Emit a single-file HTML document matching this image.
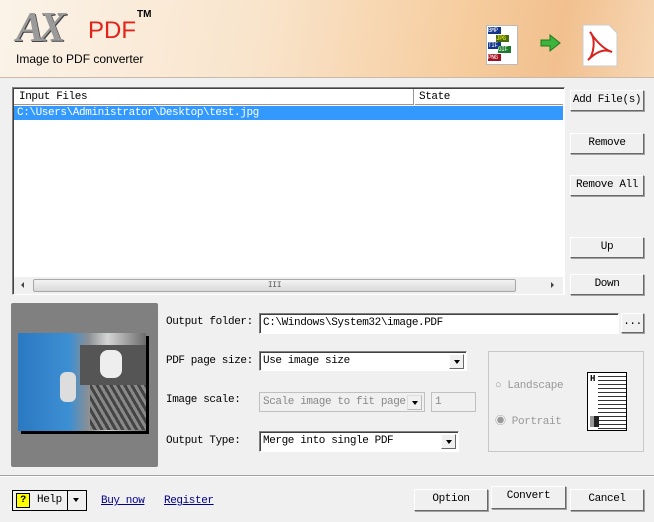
<!DOCTYPE html>
<html><head><style>
*{box-sizing:border-box;margin:0;padding:0}
body{width:654px;height:522px;background:#f0f0f0;position:relative;overflow:hidden;font-family:"Liberation Mono","Noto Sans CJK SC",monospace;font-size:11px;letter-spacing:-0.4px;color:#000}
.a{position:absolute}
.btn{position:absolute;background:#f0f0f0;border:1px solid;border-color:#fff #696969 #696969 #fff;box-shadow:1px 1px 0 #a0a0a0;text-align:center;line-height:19px}
.sunk{position:absolute;background:#fff;border:1px solid;border-color:#808080 #fff #fff #808080;box-shadow:inset 1px 1px 0 #404040;line-height:19px;padding-left:3px}
.dd{position:absolute;right:2px;top:2px;width:15px;height:15px;background:#f0f0f0;border:1px solid;border-color:#fff #696969 #696969 #fff}
.dd:after{content:"";position:absolute;left:4px;top:5px;border:3px solid transparent;border-top:4px solid #000}
</style></head><body>
<div class="a" style="left:0;top:0;width:654px;height:78px;background:linear-gradient(100deg,#fbf3e9 0%,#f9e4cb 40%,#f6cd9f 70%,#f2c08e 85%,#f6d7b5 100%);border-bottom:1px solid #c9b9a6"></div>
<div class="a" style="left:16px;top:4px;font-family:'Liberation Serif',serif;font-style:italic;font-weight:bold;font-size:42px;color:#9a9a9a;text-shadow:1px 1px 0 #444;letter-spacing:-6px">AX</div>
<div class="a" style="left:88px;top:17px;font-family:'Liberation Sans',sans-serif;font-size:24px;color:#e2231a;letter-spacing:0">PDF</div>
<div class="a" style="left:137px;top:9px;font-family:'Liberation Sans',sans-serif;font-size:10px;font-weight:bold;letter-spacing:0">TM</div>
<div class="a" style="left:16px;top:52px;font-family:'Liberation Sans',sans-serif;font-size:12px;letter-spacing:0">Image to PDF converter</div>
<div class="a" style="left:486px;top:25px;width:32px;height:40px;background:#fff;border:1px solid #bbb"></div>
<div class="a" style="left:488px;top:27px;width:13px;height:7px;background:#13368c;color:#fff;font-size:6px;line-height:7px">BMP</div>
<div class="a" style="left:496px;top:35px;width:13px;height:7px;background:#4b6b12;color:#ff0;font-size:6px;line-height:7px">JPG</div>
<div class="a" style="left:488px;top:42px;width:13px;height:7px;background:#13368c;color:#fff;font-size:6px;line-height:7px">TIF</div>
<div class="a" style="left:498px;top:46px;width:13px;height:7px;background:#1c7a2a;color:#fff;font-size:6px;line-height:7px">GIF</div>
<div class="a" style="left:488px;top:54px;width:13px;height:7px;background:#a01020;color:#fff;font-size:6px;line-height:7px">PNG</div>
<svg class="a" style="left:539px;top:33px" width="24" height="20"><path d="M2 7h9V2l10 8-10 8v-5H2z" fill="#3db53d" stroke="#1a7a1a"/></svg>
<svg class="a" style="left:580px;top:24px" width="40" height="44"><path d="M3 1h26l8 8v33H3z" fill="#fff" stroke="#ccc"/><path d="M10 8c6 6 4 24-2 28 8-8 16-12 24-8-6-2-14-8-22-20z" fill="none" stroke="#d8231e" stroke-width="2"/></svg>

<div class="a" style="left:12px;top:87px;width:553px;height:208px;background:#fff;border:1px solid;border-color:#808080 #fff #fff #808080;box-shadow:inset 1px 1px 0 #404040"></div>
<div class="a" style="left:14px;top:89px;width:400px;height:16px;border-right:1px solid #999;border-bottom:1px solid #999;background:#fff;padding-left:5px;line-height:16px">Input Files</div>
<div class="a" style="left:415px;top:89px;width:148px;height:16px;border-bottom:1px solid #999;padding-left:4px;line-height:16px">State</div>
<div class="a" style="left:14px;top:106px;width:549px;height:14px;background:#3399ff;color:#fff;padding-left:3px;line-height:14px">C:\Users\Administrator\Desktop\test.jpg</div>
<div class="a" style="left:14px;top:277px;width:549px;height:17px;background:#f0f0f0"></div>
<div class="a" style="left:33px;top:279px;width:483px;height:13px;background:linear-gradient(#f3f3f3,#d9d9d9);border:1px solid #a8a8a8;border-radius:2px;text-align:center;font-size:8px;line-height:11px;color:#555">III</div>
<div class="a" style="left:18px;top:282px;border:3px solid transparent;border-right:3px solid #444"></div>
<div class="a" style="left:551px;top:282px;border:3px solid transparent;border-left:3px solid #444"></div>

<div class="btn" style="left:570px;top:90px;width:74px;height:21px">Add File(s)</div>
<div class="btn" style="left:570px;top:133px;width:74px;height:21px">Remove</div>
<div class="btn" style="left:570px;top:175px;width:74px;height:21px">Remove All</div>
<div class="btn" style="left:570px;top:237px;width:74px;height:21px">Up</div>
<div class="btn" style="left:570px;top:274px;width:74px;height:21px">Down</div>

<div class="a" style="left:11px;top:303px;width:147px;height:164px;background:#808080;border-radius:2px"></div>
<div class="a" style="left:21px;top:336px;width:128px;height:98px;background:#000"></div>
<div class="a" style="left:18px;top:333px;width:128px;height:98px;background:linear-gradient(90deg,#2a79c2 0%,#3d8fd3 40%,#8b8f93 55%,#d5d5d5 70%,#6c6c6c 100%)"></div>
<div class="a" style="left:80px;top:345px;width:66px;height:40px;background:#555"></div>
<div class="a" style="left:100px;top:350px;width:22px;height:28px;background:#eee;border-radius:8px"></div>
<div class="a" style="left:60px;top:372px;width:16px;height:30px;background:#ddd;border-radius:6px"></div>
<div class="a" style="left:90px;top:385px;width:56px;height:45px;background:repeating-linear-gradient(60deg,#888 0 3px,#444 3px 6px)"></div>

<div class="a" style="left:166px;top:316px">Output folder:</div>
<div class="sunk" style="left:259px;top:313px;width:360px;height:21px">C:\Windows\System32\image.PDF</div>
<div class="btn" style="left:621px;top:313px;width:23px;height:20px;line-height:16px">...</div>
<div class="a" style="left:166px;top:355px">PDF page size:</div>
<div class="sunk" style="left:259px;top:351px;width:208px;height:20px">Use image size<div class="dd"></div></div>
<div class="a" style="left:166px;top:394px">Image scale:</div>
<div class="sunk" style="left:259px;top:392px;width:166px;height:20px;background:#f0f0f0;color:#888;box-shadow:none;border-color:#c0c0c0">Scale image to fit page<div class="dd" style="border-color:#ddd #bbb #bbb #ddd"></div></div>
<div class="sunk" style="left:431px;top:392px;width:45px;height:20px;background:#f0f0f0;color:#888;box-shadow:none;border-color:#c0c0c0">1</div>
<div class="a" style="left:166px;top:435px">Output Type:</div>
<div class="sunk" style="left:259px;top:431px;width:200px;height:21px">Merge into single PDF<div class="dd"></div></div>

<div class="a" style="left:488px;top:351px;width:156px;height:101px;border:1px solid #c8c8c8"></div>
<div class="a" style="left:495px;top:380px;color:#999">○ Landscape</div>
<div class="a" style="left:495px;top:412px;color:#999">◉ Portrait</div>
<div class="a" style="left:587px;top:372px;width:40px;height:59px;background:#fff;border:1px solid #000;background-image:repeating-linear-gradient(#fff 0 3px,#333 3px 4px);background-size:28px 100%;background-position:10px 0;background-repeat:no-repeat"></div>
<div class="a" style="left:590px;top:375px;font-size:9px;font-weight:bold;line-height:9px;background:#fff">H</div>
<div class="a" style="left:590px;top:416px;width:9px;height:11px;background:#222;border-left:4px solid #999"></div>

<div class="a" style="left:0;top:475px;width:654px;height:1px;background:#a0a0a0;border-bottom:1px solid #fff;box-sizing:content-box"></div>

<div class="a" style="left:12px;top:490px;width:75px;height:21px;border:1px solid #000;background:#f0f0f0"></div>
<div class="a" style="left:16px;top:493px;width:14px;height:15px;background:#ff0;border:1px solid #000;font-size:10px;font-weight:bold;text-align:center;line-height:13px">?</div>
<div class="a" style="left:37px;top:494px">Help</div>
<div class="a" style="left:67px;top:491px;width:1px;height:19px;background:#000"></div>
<div class="a" style="left:73px;top:498px;border:3px solid transparent;border-top:4px solid #000"></div>
<div class="a" style="left:101px;top:495px;color:#00008b;text-decoration:underline">Buy now</div>
<div class="a" style="left:164px;top:495px;color:#00008b;text-decoration:underline">Register</div>
<div class="btn" style="left:414px;top:489px;width:74px;height:22px">Option</div>
<div class="btn" style="left:491px;top:486px;width:75px;height:23px">Convert</div>
<div class="btn" style="left:570px;top:489px;width:74px;height:22px">Cancel</div>
</body></html>
